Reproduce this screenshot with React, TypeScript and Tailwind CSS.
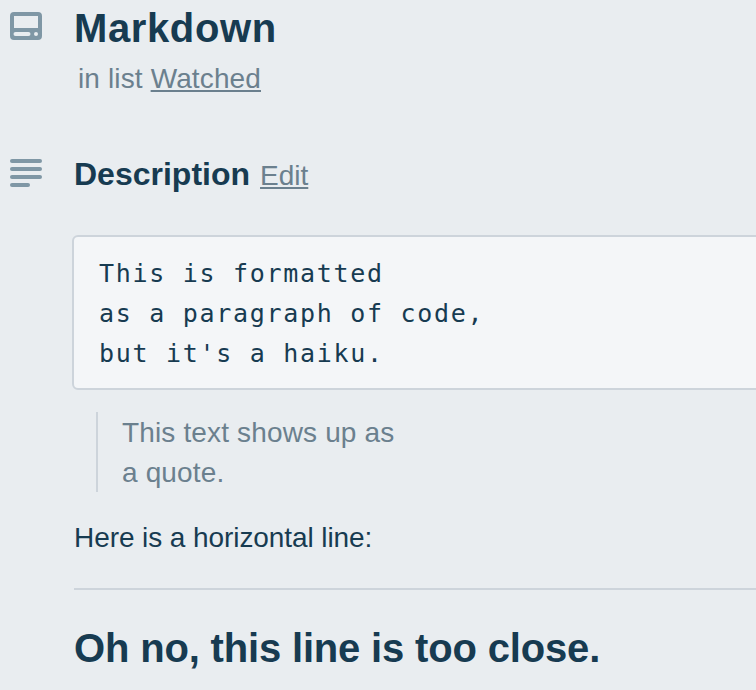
import React from "react";

function CardIcon() {
  return (
    <svg width="32" height="28" viewBox="0 0 32 28" className="block">
      <path
        fill="#7F97A5"
        fillRule="evenodd"
        d="M4 0h24a4 4 0 0 1 4 4v20a4 4 0 0 1-4 4H4a4 4 0 0 1-4-4V4a4 4 0 0 1 4-4Zm0 4v12h24V4H4Zm1.500 16a2 2 0 0 0 0 4h13a2 2 0 0 0 0-4h-13Zm20.500 0a2 2 0 1 0 0 4 2 2 0 0 0 0-4Z"
      />
    </svg>
  );
}

function LinesIcon() {
  return (
    <svg width="32" height="29" viewBox="0 0 32 29" className="block">
      <rect x="0" y="0" width="32" height="4" rx="2" fill="#7F97A5" />
      <rect x="0" y="8" width="32" height="4" rx="2" fill="#7F97A5" />
      <rect x="0" y="16" width="32" height="4" rx="2" fill="#7F97A5" />
      <rect x="0" y="24" width="20" height="4" rx="2" fill="#7F97A5" />
    </svg>
  );
}

export default function App() {
  return (
    <div className="h-[690px] w-[756px] overflow-hidden bg-[#E9EDF0] font-['Liberation_Sans',Arial,sans-serif] text-[28px] leading-[40px] text-[#173B51]">
      {/* Card title */}
      <div className="flex pt-[8px]">
        <div className="w-[74px] shrink-0 pl-[10px] pt-[4px]">
          <CardIcon />
        </div>
        <div>
          <h1 className="text-[40px] leading-[40px] font-bold tracking-[0.62px]">Markdown</h1>
          <div className="mt-[11px] pl-[4px] tracking-[0.13px] text-[#6B808E]">
            in list <a className="underline">Watched</a>
          </div>
        </div>
      </div>

      {/* Description */}
      <div className="mt-[55px] flex">
        <div className="w-[74px] shrink-0 pl-[10px] pt-[5px]">
          <LinesIcon />
        </div>
        <div className="min-w-0 flex-1">
          <div className="flex items-baseline gap-[10px]">
            <h2 className="text-[32px] leading-[40px] font-bold">Description</h2>
            <a className="text-[#6B808E] underline">Edit</a>
          </div>

          <pre className="mt-[39px] mr-[-20px] ml-[-2px] rounded-[6px] border-2 border-[#CDD4DB] bg-[#F4F6F8] pt-[17px] pb-[14px] pl-[25px] font-['DejaVu_Sans_Mono',monospace] text-[25px] leading-[40px] tracking-[1.7px]">
            {"This is formatted\nas a paragraph of code,\nbut it's a haiku."}
          </pre>

          <blockquote className="mt-[22px] ml-[22px] border-l-2 border-[#CDD4DB] pl-[24px] tracking-[0.15px] text-[#6B808E]">
            <div className="translate-y-[1px]">
              This text shows up as
              <br />a quote.
            </div>
          </blockquote>

          <p className="mt-[26px] tracking-[-0.08px]">Here is a horizontal line:</p>
          <hr className="mt-[30px] border-t-2 border-[#CDD4DB]" />
          <h3 className="mt-[38px] text-[40px] leading-[40px] font-bold tracking-[-0.17px]">Oh no, this line is too close.</h3>
        </div>
      </div>
    </div>
  );
}
